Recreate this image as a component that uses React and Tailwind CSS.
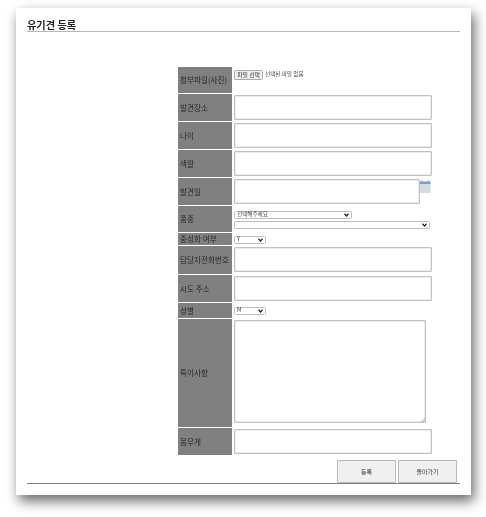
function Row({ label, h, children, mt = "mt-px" }) {
  return (
    <div className={`flex ${mt}`} style={{ height: h }}>
      <div className="w-[54px] shrink-0 bg-[#808080] flex items-center pl-[2px] text-[7.6px] text-[#262626] whitespace-nowrap">
        {label}
      </div>
      <div className="flex-1 pl-[2px] min-w-0">{children}</div>
    </div>
  );
}

function Box({ w = "w-[198px]", h = "h-[25px]", mt = "mt-px" }) {
  return <div className={`${w} ${h} ${mt} bg-white border border-[#c2c2c2] rounded-[1px] shadow-[inset_0_0_0_0.5px_#dcdcdc]`} />;
}

function Select({ w, text, mt = "mt-0" }) {
  return (
    <div className={`${w} ${mt} h-[8px] bg-white border border-[#bcbcbc] rounded-[1.5px] flex items-center justify-between pl-[2px] pr-[2px] text-[5.6px] leading-none text-[#444]`}>
      <span>{text}</span>
      <svg width="5" height="4" viewBox="0 0 10 8"><path d="M1 1.5 L5 6 L9 1.5" fill="none" stroke="#222" strokeWidth="2.4" /></svg>
    </div>
  );
}

export default function App() {
  return (
    <div className="w-[486px] h-[517px] bg-white overflow-hidden pt-2 pl-4 font-['Noto_Sans_CJK_KR','Liberation_Sans',sans-serif] blur-[0.3px]">
      <div className="w-[455px] h-[487px] bg-white shadow-[3px_6px_12px_rgba(0,0,0,0.6)] pt-[10px] px-[11px]">
        <div className="w-[433px] border-b border-[#b8b8b8] h-[14px] text-[10.2px] leading-[13px] font-bold text-[#222]">유기견 등록</div>
        <div className="ml-[151px] mt-[35px] w-[270px]">
          <Row label="첨부파일(사진)" h={26} mt="mt-0">
            <div className="flex items-center gap-[2px] mt-[3px]">
              <div className="w-[29px] h-[10px] bg-[#f0f0f0] border border-[#aaaaaa] rounded-[1.5px] flex items-center justify-center text-[5.8px] leading-none text-[#333] whitespace-nowrap">파일 선택</div>
              <span className="text-[5.6px] leading-none text-[#444] whitespace-nowrap">선택된 파일 없음</span>
            </div>
          </Row>
          <Row label="발견장소" h={27}><Box /></Row>
          <Row label="나이" h={27}><Box /></Row>
          <Row label="색깔" h={27}><Box /></Row>
          <Row label="발견일" h={27}>
            <div className="flex">
              <Box w="w-[186px]" />
              <svg className="mt-[2px]" width="11" height="13" viewBox="0 0 11 13">
                <rect x="0" y="4" width="10.5" height="9" fill="#d8dadc" />
                <rect x="0" y="1.5" width="10.5" height="2.5" fill="#6b9ded" />
                <rect x="1.5" y="0.5" width="1" height="2" fill="#8a9db4" />
                <rect x="8" y="0.5" width="1" height="2" fill="#8a9db4" />
              </svg>
            </div>
          </Row>
          <Row label="품종" h={26}>
            <Select w="w-[118px]" text="선택해주세요" mt="mt-[5px]" />
            <Select w="w-[196px]" text="" mt="mt-[2px]" />
          </Row>
          <Row label="중성화 여부" h={12}><Select w="w-[32px]" text="Y" mt="mt-[3px]" /></Row>
          <Row label="담당자전화번호" h={28}><Box /></Row>
          <Row label="시도 주소" h={27}><Box /></Row>
          <Row label="성별" h={15}><Select w="w-[32px]" text="M" mt="mt-[4px]" /></Row>
          <Row label="특이사항" h={108}>
            <div className="relative w-[192px] h-[103px] mt-px bg-white border border-[#c2c2c2] rounded-[1px] shadow-[inset_0_0_0_0.5px_#dcdcdc]">
              <svg className="absolute right-0 bottom-0" width="5" height="5" viewBox="0 0 5 5"><path d="M1 5 L5 1 M3 5 L5 3" stroke="#999" strokeWidth="0.7" /></svg>
            </div>
          </Row>
          <Row label="몸무게" h={27}><Box /></Row>
        </div>
        <div className="w-[433px] mt-[5px] flex justify-end gap-[2px] pr-[3px]">
          <div className="w-[59px] h-[23px] bg-[#f0f0f0] border border-[#b8b8b8] rounded-[1px] flex items-center justify-center text-[6px] text-[#333]">등록</div>
          <div className="w-[59px] h-[23px] bg-[#f0f0f0] border border-[#b8b8b8] rounded-[1px] flex items-center justify-center text-[6px] text-[#333]">돌아가기</div>
        </div>
        <div className="w-[433px] h-px bg-[#808080]" />
      </div>
    </div>
  );
}
